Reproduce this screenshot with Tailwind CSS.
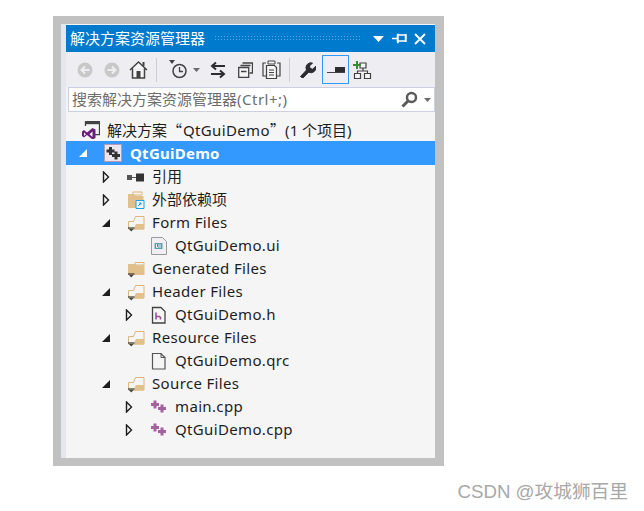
<!DOCTYPE html>
<html lang="zh-CN"><head><meta charset="utf-8"><script src="https://cdn.jsdelivr.net/npm/@tailwindcss/browser@4"></script></head>
<body class="bg-white">
<svg class="hidden" width="0" height="0">
<symbol id="fo" viewBox="0 0 18 18"><path d="M1.500 7.500h5l2-5h8.500v12.500H1.500z" fill="#f5f5f5" stroke="#dcb67a"/><path d="M6.500 15l2.500-5h8v5.500H6.500z" fill="#e2c08c"/><path d="M1 14h6.500" stroke="#424242" stroke-width="1.300"/><path d="M2 15h4.500l-2.250 2.500z" fill="#424242"/></symbol>
<symbol id="fc" viewBox="0 0 18 18"><path d="M1 4h7l1.500 1.500H17.500V15H1z" fill="#e2c08c"/><path d="M8 2.500h9v2.500H8z" fill="#f5f5f5" stroke="#dcb67a"/><path d="M1 14h6.500" stroke="#424242" stroke-width="1.300"/><path d="M2 15h4.500l-2.250 2.500z" fill="#424242"/></symbol>
<symbol id="open" viewBox="0 0 10 12"><path d="M1.500 1l5 5-5 5z" fill="#f5f5f5" stroke="#1e1e1e" stroke-width="1.400"/></symbol>
<symbol id="down" viewBox="0 0 10 12"><path d="M0 10h8V2z" fill="#1e1e1e"/></symbol>
<symbol id="plus" viewBox="0 0 18 18"><g fill="#a560a0"><path d="M3.500 2.500h3v2.500h2.500v3H6.500v2.500h-3V8H1V5h2.500z"/><path d="M10.500 6.500h3V9h2.500v3h-2.500v2.500h-3V12H8V9h2.500z"/></g></symbol>
</svg>
<div class="w-[644px] h-[511px] overflow-hidden" style="font-family:'Noto Sans','Noto Sans CJK SC',sans-serif">
<div class="ml-[53px] mt-[16px] w-[391px] h-[450px] bg-[#c1c1c1] pl-[8px] pt-[8px] pr-[9px] pb-[8px] flex">
 <div class="w-[5px] bg-[#e6e6ee] shrink-0"></div>
 <div class="w-[369px] flex flex-col bg-[#f5f5f5]">
  <div class="h-[1px] bg-[#f5f5f5]"></div>
  <div class="h-[27px] bg-[#007acc] flex items-center pl-[4px] text-white text-[15px]">
   <span class="leading-[27px] w-[140px] shrink-0">解决方案资源管理器</span>
   <div class="ml-[4px] w-[148px] h-[7px] bg-[radial-gradient(circle,#5aa9e0_0.8px,transparent_1px)] bg-[length:3px_3px]"></div>
   <svg class="ml-[11px]" width="11" height="6" viewBox="0 0 11 6"><path d="M0 0h11L5.500 6z" fill="#fff"/></svg>
   <svg class="ml-[8px]" width="15" height="11" viewBox="0 0 15 11"><path d="M0 5.500h5M5 1.500h1v8H5M5.500 2h8v6h-8zM14 1v8" fill="none" stroke="#fff" stroke-width="1.500"/></svg>
   <svg class="ml-[7px]" width="12" height="12" viewBox="0 0 12 12"><path d="M1 1l10 10M11 1L1 11" stroke="#fff" stroke-width="1.800"/></svg>
  </div>
  <div class="h-[35px] bg-[#eeeef2] flex items-center pl-[10px]">
   <svg width="18" height="18" viewBox="0 0 18 18"><circle cx="9" cy="9" r="7.500" fill="#c8c8c8"/><path d="M13.500 9H6M9 5.500L5.500 9 9 12.500" fill="none" stroke="#eeeef2" stroke-width="2"/></svg>
   <svg class="ml-[9px]" width="18" height="18" viewBox="0 0 18 18"><circle cx="9" cy="9" r="7.500" fill="#c8c8c8"/><path d="M4.500 9H12M9 5.500L12.500 9 9 12.500" fill="none" stroke="#eeeef2" stroke-width="2"/></svg>
   <svg class="ml-[8px]" width="19" height="19" viewBox="0 0 19 19"><path d="M1 10L9.500 2 18 10M3.500 8.500V18h12V8.500" fill="#f5f5f5" stroke="#424242" stroke-width="1.500"/><path d="M7.500 11h4v7h-4z" fill="#424242"/><path d="M13.500 2h2v4h-2z" fill="#424242"/></svg>
   <div class="ml-[8px] w-[1px] h-[24px] bg-[#ccced8]"></div>
   <svg class="ml-[12px]" width="19" height="21" viewBox="0 0 19 21"><path d="M0 1h6L3 5z" fill="#424242"/><circle cx="10.500" cy="12" r="6.500" fill="none" stroke="#424242" stroke-width="1.500"/><path d="M10.500 8v4.500h3.500" fill="none" stroke="#424242" stroke-width="1.300"/></svg>
   <svg class="ml-[5px]" width="7" height="4" viewBox="0 0 7 4"><path d="M0 0h7L3.500 4z" fill="#6b6b6b"/></svg>
   <svg class="ml-[10px]" width="16" height="18" viewBox="0 0 16 18"><path d="M15 5H2M6 1.500L2 5l4 3.500M1 13h13M10 9.500l4 3.500-4 3.500" fill="none" stroke="#2d2d30" stroke-width="2"/></svg>
   <svg class="ml-[12px]" width="15" height="16" viewBox="0 0 15 16"><path d="M4.500 1h10v10h-3M2.500 3.500h10" fill="none" stroke="#424242" stroke-width="1.300"/><path d="M.7 5.500h10v9.800H.7z" fill="#f5f5f5" stroke="#424242" stroke-width="1.300"/><path d="M3 9.500h5.500" stroke="#424242" stroke-width="1.500"/></svg>
   <svg class="ml-[9px]" width="19" height="20" viewBox="0 0 19 20"><path d="M4 3H1v13h3M15 3h3v13h-3" fill="none" stroke="#424242" stroke-width="1.200"/><path d="M6 1h7v3H6z" fill="#f5f5f5" stroke="#424242"/><path d="M4.500 5.500h8l2 2v11h-10z" fill="#f5f5f5" stroke="#424242" stroke-width="1.200"/><path d="M7 10h5M7 12.500h5M7 15h5" stroke="#424242"/></svg>
   <div class="ml-[8px] w-[1px] h-[24px] bg-[#ccced8]"></div>
   <svg class="ml-[9px]" width="17" height="17" viewBox="0 0 17 17"><path d="M1.500 15.500l6-6.500a5 5 0 0 1 6-7l-3 3 .7 2.500 2.500.7 3-3a5 5 0 0 1-7 6l-6 6z" fill="#2d2d30" stroke="#2d2d30"/></svg>
   <div class="ml-[6px] w-[27px] h-[29px] border border-[#3399ff] flex items-center justify-center shrink-0">
    <svg width="18" height="6" viewBox="0 0 18 6"><path d="M0 5h18v1H0z" fill="#424242"/><path d="M8 0h10v5H8z" fill="#2d2d30"/></svg>
   </div>
   <svg class="ml-[4px]" width="19" height="18" viewBox="0 0 19 18"><path d="M7 2h6v5H7zM1.500 12.500h6v5h-6zM11.500 12.500h6v5h-6z M10 7v3M4.500 12.500V10h10v2.500" fill="#f5f5f5" stroke="#424242" stroke-width="1.200"/><path d="M3 0h2v3h3v2H5v3H3V5H0V3h3z" fill="#388a34"/></svg>
  </div>
  <div class="h-[25px] ml-[2px] bg-white border border-[#ccd0e0] flex items-center pl-[3px] text-[15px] text-[#6d6d6d] leading-none">
   <span class="w-[329px] shrink-0">搜索解决方案资源管理器<span class="tracking-[0.5px]">(Ctrl+;)</span></span>
   <svg width="17" height="17" viewBox="0 0 17 17"><circle cx="10.500" cy="6.500" r="4.500" fill="none" stroke="#5a5a5a" stroke-width="2.500"/><path d="M7 10l-5.500 5.500" stroke="#5a5a5a" stroke-width="3"/></svg>
   <svg class="ml-[6px]" width="7" height="4" viewBox="0 0 7 4"><path d="M0 0h7L3.500 4z" fill="#6b6b6b"/></svg>
  </div>
  <div class="pt-[6px] text-[15px] text-[#1e1e1e] leading-[23px]">
   <div class="h-[23px] flex items-center pl-[16px]">
    <svg class="w-[18px] h-[18px] mr-[7px]" viewBox="0 0 18 18"><path d="M3.500 5V.700h14v13h-5" fill="none" stroke="#424242" stroke-width="1.300"/><path d="M3.500 .700h14v2.500h-14z" fill="#424242"/><path d="M0 10.500l2-1.500 3 2.500 5.500-4.500 3 1.500v8.500l-3 1.500-5.500-4.500-3 2.500-2-1.500zM2 11.500v3.500l2-1.750zM10.500 10.500l-3 2.750 3 2.750z" fill="#68217a" fill-rule="evenodd"/></svg>
    <span class="whitespace-pre font-['Noto_Sans_CJK_SC']">解决方案“<span class="ml-[1px] font-['Noto_Sans'] tracking-[0.35px]">QtGuiDemo</span>”<span class="font-['Noto_Sans'] tracking-[0.35px]">(1</span> 个项目<span class="font-['Noto_Sans']">)</span></span>
   </div>
   <div class="h-[24px] flex items-center pl-[13px] bg-[#3399ff] text-white font-bold">
    <div class="w-[25px]"><svg width="10" height="12" viewBox="0 0 10 12"><path d="M0 10h8V2z" fill="#fff"/></svg></div>
    <svg class="w-[18px] h-[18px] mr-[8px]" viewBox="0 0 18 18"><path d="M.5.500h17v17H.500z" fill="#ebe6ee" stroke="#b49ab5"/><path d="M5 3h3v2.500h2.500v3H8V11H5V8.500H2.500v-3H5zM10.500 7.500h3V10H16v3h-2.500v2.500h-3V13H8v-3h2.500z" fill="#333"/></svg>
    <span class="tracking-[0.25px]">QtGuiDemo</span>
   </div>
   <div class="h-[23px] flex items-center pl-[36px]">
    <div class="w-[25px]"><svg width="10" height="12"><use href="#open"/></svg></div>
    <svg class="w-[18px] h-[18px] mr-[7px]" viewBox="0 0 18 18"><path d="M0 7h5v5H0z" fill="#555"/><path d="M5 9.500h4" stroke="#555"/><path d="M9 5.500h8v8H9z" fill="#333"/></svg>
    <span>引用</span>
   </div>
   <div class="h-[23px] flex items-center pl-[36px]">
    <div class="w-[25px]"><svg width="10" height="12"><use href="#open"/></svg></div>
    <svg class="w-[18px] h-[18px] mr-[7px]" viewBox="0 0 18 18"><path d="M1 3h6l1.500 2h8v12H1z" fill="#e2c08c"/><path d="M6 1h9v3H6z" fill="#f5f5f5" stroke="#dcb67a"/><path d="M9 9.500h8v8H9z" fill="#f5f5f5" stroke="#1ba1e2"/><path d="M11 15l3-3M12 12h2v2" stroke="#1ba1e2" fill="none"/></svg>
    <span>外部依赖项</span>
   </div>
   <div class="h-[23px] flex items-center pl-[36px]">
    <div class="w-[25px]"><svg width="10" height="12"><use href="#down"/></svg></div>
    <svg class="w-[18px] h-[18px] mr-[7px]"><use href="#fo"/></svg>
    <span class="tracking-[0.35px]">Form Files</span>
   </div>
   <div class="h-[23px] flex items-center pl-[84px]">
    <svg class="w-[18px] h-[18px] mr-[7px]" viewBox="0 0 18 18"><path d="M1.500.500h11l4 4v13h-15z" fill="#f0eef2" stroke="#9a9a9a"/><path d="M4.500 6h8v6h-8z" fill="#5f9ea8"/><path d="M6.500 7v3.500h1.500V7M10 7v4" stroke="#f0eef2"/></svg>
    <span class="tracking-[0.35px]">QtGuiDemo.ui</span>
   </div>
   <div class="h-[23px] flex items-center pl-[61px]">
    <svg class="w-[18px] h-[18px] mr-[7px]"><use href="#fc"/></svg>
    <span class="tracking-[0.35px]">Generated Files</span>
   </div>
   <div class="h-[23px] flex items-center pl-[36px]">
    <div class="w-[25px]"><svg width="10" height="12"><use href="#down"/></svg></div>
    <svg class="w-[18px] h-[18px] mr-[7px]"><use href="#fo"/></svg>
    <span class="tracking-[0.35px]">Header Files</span>
   </div>
   <div class="h-[23px] flex items-center pl-[59px]">
    <div class="w-[25px]"><svg width="10" height="12"><use href="#open"/></svg></div>
    <svg class="w-[18px] h-[18px] mr-[7px]" viewBox="0 0 18 18"><path d="M2.500 1.500h8.500l4 4v11.500H2.500z" fill="#f5f5f5" stroke="#424242" stroke-width="1.300"/><path d="M6 6.500v7M6 10.500h3.500l1 1v2" fill="none" stroke="#9b4f96" stroke-width="1.600"/></svg>
    <span class="tracking-[0.35px]">QtGuiDemo.h</span>
   </div>
   <div class="h-[23px] flex items-center pl-[36px]">
    <div class="w-[25px]"><svg width="10" height="12"><use href="#down"/></svg></div>
    <svg class="w-[18px] h-[18px] mr-[7px]"><use href="#fo"/></svg>
    <span class="tracking-[0.35px]">Resource Files</span>
   </div>
   <div class="h-[23px] flex items-center pl-[84px]">
    <svg class="w-[18px] h-[18px] mr-[7px]" viewBox="0 0 18 18"><path d="M2.500 1.500h8.500l4 4v11.500H2.500z" fill="#f5f5f5" stroke="#555" stroke-width="1.200"/><path d="M11 1.500v4h4" fill="none" stroke="#555"/></svg>
    <span class="tracking-[0.35px]">QtGuiDemo.qrc</span>
   </div>
   <div class="h-[23px] flex items-center pl-[36px]">
    <div class="w-[25px]"><svg width="10" height="12"><use href="#down"/></svg></div>
    <svg class="w-[18px] h-[18px] mr-[7px]"><use href="#fo"/></svg>
    <span class="tracking-[0.35px]">Source Files</span>
   </div>
   <div class="h-[23px] flex items-center pl-[59px]">
    <div class="w-[25px]"><svg width="10" height="12"><use href="#open"/></svg></div>
    <svg class="w-[18px] h-[18px] mr-[7px]"><use href="#plus"/></svg>
    <span class="tracking-[0.35px]">main.cpp</span>
   </div>
   <div class="h-[23px] flex items-center pl-[59px]">
    <div class="w-[25px]"><svg width="10" height="12"><use href="#open"/></svg></div>
    <svg class="w-[18px] h-[18px] mr-[7px]"><use href="#plus"/></svg>
    <span class="tracking-[0.35px]">QtGuiDemo.cpp</span>
   </div>
  </div>
 </div>
</div>
<div class="mt-[14px] pr-[16px] text-right text-[18.7px] leading-[24px] text-[#a8a8a8]" style="font-family:'Liberation Sans','Noto Sans CJK SC',sans-serif">CSDN @攻城狮百里</div>
</div>
</body></html>
